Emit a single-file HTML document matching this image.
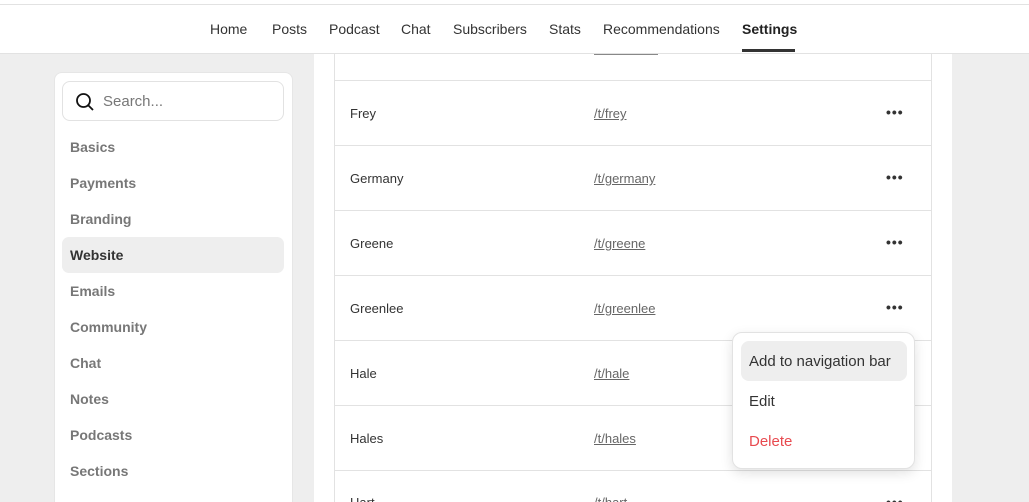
<!DOCTYPE html><html style="width:1029px;height:502px;overflow:hidden"><head><style>
*{box-sizing:border-box;margin:0;padding:0}
body{width:1029px;height:502px;overflow:hidden;background:#eeeeee;font-family:"Liberation Sans",sans-serif;position:relative;color:#333}
.top{position:absolute;left:0;top:4px;width:1029px;height:50px;background:#fff;border-top:1px solid #e2e2e2;border-bottom:1px solid #e2e2e2}
.topw{position:absolute;left:0;top:0;width:1029px;height:4px;background:#fff}
.nav{position:absolute;top:21px;font-size:14px;color:#333}
.nav span{position:absolute;white-space:nowrap}
.card{position:absolute;left:54px;top:72px;width:239px;height:430px;background:#fff;border-radius:8px 8px 0 0;border:1px solid #e6e6e6;border-bottom:none}
.search{position:absolute;left:62px;top:81px;width:222px;height:40px;border:1px solid #e2e2e2;border-radius:8px}
.search span{position:absolute;left:40px;top:11px;font-size:15px;color:#777}
.si{position:absolute;left:70px;font-size:14px;color:#777;font-weight:bold}
.sel{position:absolute;left:62px;top:237px;width:222px;height:36px;background:#eee;border-radius:7px}
.main{position:absolute;left:314px;top:54px;width:638px;height:448px;background:#fff}
.tbl{position:absolute;left:334px;top:54px;width:598px;height:448px;border-left:1px solid #e2e2e2;border-right:1px solid #e2e2e2}
.row{position:absolute;left:334px;width:598px;height:65px;border-top:1px solid #e2e2e2;font-size:13px;color:#333}
.row .n{position:absolute;left:16px;top:25px}
.row .l{position:absolute;left:260px;top:25px;text-decoration:underline;color:#666}
.row .d{position:absolute;left:552px;top:23px;font-size:14px;letter-spacing:1px;font-weight:bold}
.menu{position:absolute;left:732px;top:332px;width:183px;height:137px;background:#fff;border:1px solid #e2e2e2;border-radius:10px;box-shadow:0 4px 12px rgba(0,0,0,.12)}
.mi{position:absolute;left:16px;font-size:15px}
</style></head><body>
<div class="topw"></div><div class="top"></div>
<div class="nav">
<span style="left:210px">Home</span><span style="left:272px">Posts</span><span style="left:329px">Podcast</span><span style="left:401px">Chat</span><span style="left:453px">Subscribers</span><span style="left:549px">Stats</span><span style="left:603px">Recommendations</span><span style="left:742px;font-weight:bold;color:#222">Settings</span>
</div>
<div style="position:absolute;left:742px;top:49px;width:53px;height:3px;background:#333"></div>
<div class="card"></div>
<div class="search"><svg style="position:absolute;left:12px;top:10px" width="20" height="20" viewBox="0 0 20 20"><circle cx="8.5" cy="8.5" r="6.5" fill="none" stroke="#111" stroke-width="1.8"/><line x1="13.2" y1="13.2" x2="18" y2="18" stroke="#111" stroke-width="1.8"/></svg><span>Search...</span></div>
<div class="sel"></div>
<div class="si" style="top:139px">Basics</div><div class="si" style="top:175px">Payments</div><div class="si" style="top:211px">Branding</div><div class="si" style="top:247px;color:#333">Website</div><div class="si" style="top:283px">Emails</div><div class="si" style="top:319px">Community</div><div class="si" style="top:355px">Chat</div><div class="si" style="top:391px">Notes</div><div class="si" style="top:427px">Podcasts</div><div class="si" style="top:463px">Sections</div>
<div class="main"></div><div class="tbl"></div>
<div style="position:absolute;left:594px;top:54px;width:64px;border-top:1px solid #888"></div>
<div class="row" style="top:80px"><span class="n">Frey</span><span class="l">/t/frey</span><span class="d">•••</span></div>
<div class="row" style="top:145px"><span class="n">Germany</span><span class="l">/t/germany</span><span class="d">•••</span></div>
<div class="row" style="top:210px"><span class="n">Greene</span><span class="l">/t/greene</span><span class="d">•••</span></div>
<div class="row" style="top:275px"><span class="n">Greenlee</span><span class="l">/t/greenlee</span><span class="d">•••</span></div>
<div class="row" style="top:340px"><span class="n">Hale</span><span class="l">/t/hale</span></div>
<div class="row" style="top:405px"><span class="n">Hales</span><span class="l">/t/hales</span></div>
<div class="row" style="top:470px;height:32px"><span class="n" style="top:24px">Hart</span><span class="l" style="top:24px">/t/hart</span><span class="d">•••</span></div>
<div class="menu">
<div style="position:absolute;left:8px;top:8px;width:166px;height:40px;background:#eee;border-radius:8px"></div>
<div class="mi" style="top:20px;color:#333">Add to navigation bar</div>
<div class="mi" style="top:60px;color:#333">Edit</div>
<div class="mi" style="top:100px;color:#e84a4f">Delete</div>
</div>
</body></html>
